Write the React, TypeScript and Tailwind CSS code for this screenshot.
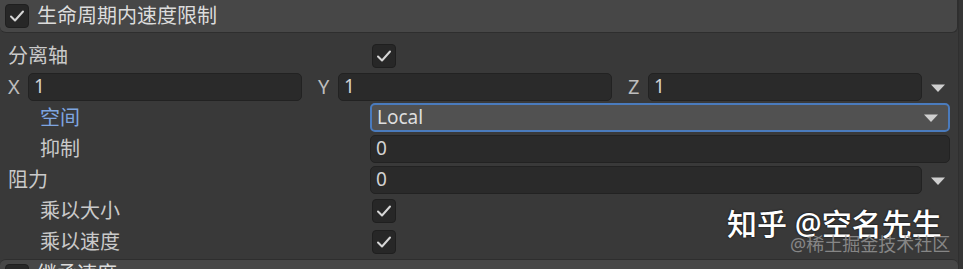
import React from "react";

const font = { fontFamily: '"Noto Sans", "Noto Sans CJK SC", sans-serif' };

function Check() {
  return (
    <div className="w-[24px] h-[24px] rounded-[4px] bg-[#272727] border border-[#1f1f1f] flex items-center justify-center">
      <svg width="16" height="14" viewBox="0 0 16 14">
        <path d="M2 7.5 L6 11.5 L14 2.5" fill="none" stroke="#d6d6d6" strokeWidth="2" strokeLinecap="round" strokeLinejoin="round" />
      </svg>
    </div>
  );
}

function Arrow() {
  return (
    <svg width="16" height="10" viewBox="0 0 16 10">
      <path d="M1 1.5 L15 1.5 L8 9 Z" fill="#cfcfcf" />
    </svg>
  );
}

function Field({ value, className = "" }: { value: string; className?: string }) {
  return (
    <div className={"h-[28px] rounded-[5px] bg-[#2a2a2a] border border-[#222] flex items-center pl-[5px] text-[19px] text-[#d2d2d2] " + className}>
      {value}
    </div>
  );
}

function Row({ children }: { children: React.ReactNode }) {
  return <div className="h-[31px] flex items-center">{children}</div>;
}

export default function App() {
  return (
    <div className="w-[963px] h-[269px] bg-[#393939] relative overflow-hidden" style={font}>
      {/* Header */}
      <div className="h-[33px] mr-[5px] bg-[#474747] rounded-b-[6px] border-b border-r border-[#2e2e2e] flex items-center pl-[5px]">
        <Check />
        <span className="ml-[8px] text-[20px] text-[#dcdcdc] leading-none">生命周期内速度限制</span>
      </div>

      <div className="mt-[7px]">
        <Row>
          <span className="w-[370px] pl-[8px] text-[20px] text-[#cacaca]">分离轴</span>
          <div className="ml-[2px]"><Check /></div>
        </Row>
        <Row>
          <span className="w-[20px] pl-[8px] box-content text-[20px] text-[#bdbdbd] leading-none">X</span>
          <Field value="1" className="w-[274px]" />
          <span className="w-[20px] ml-[16px] text-[20px] text-[#bdbdbd] leading-none">Y</span>
          <Field value="1" className="w-[274px]" />
          <span className="w-[20px] ml-[16px] text-[20px] text-[#bdbdbd] leading-none">Z</span>
          <Field value="1" className="w-[274px]" />
          <div className="ml-[8px] mt-[2px]"><Arrow /></div>
        </Row>
        <Row>
          <span className="w-[370px] pl-[40px] text-[20px] text-[#7ea5e0]">空间</span>
          <div className="w-[580px] h-[29px] rounded-[5px] bg-[#515151] border-2 border-[#4a7bbd] flex items-center pl-[5px] pr-[9px] text-[19px] text-[#dedede]">
            <span className="flex-1">Local</span>
            <Arrow />
          </div>
        </Row>
        <Row>
          <span className="w-[370px] pl-[40px] text-[20px] text-[#cacaca]">抑制</span>
          <Field value="0" className="w-[580px]" />
        </Row>
        <Row>
          <span className="w-[370px] pl-[8px] text-[20px] text-[#cacaca]">阻力</span>
          <Field value="0" className="w-[552px]" />
          <div className="ml-[8px] mt-[2px]"><Arrow /></div>
        </Row>
        <Row>
          <span className="w-[370px] pl-[40px] text-[20px] text-[#cacaca]">乘以大小</span>
          <div className="ml-[2px]"><Check /></div>
        </Row>
        <Row>
          <span className="w-[370px] pl-[40px] text-[20px] text-[#cacaca]">乘以速度</span>
          <div className="ml-[2px]"><Check /></div>
        </Row>
      </div>

      {/* Next header */}
      <div className="mt-[2px] h-[33px] mr-[5px] bg-[#474747] rounded-t-[6px] border-t border-[#2e2e2e] flex items-start pt-[4px] pl-[5px]">
        <Check />
        <span className="ml-[8px] text-[20px] text-[#dcdcdc] leading-none">继承速度</span>
      </div>

      {/* right edge */}
      <div className="absolute right-0 top-0 w-[5px] h-full bg-[#353535] border-l border-[#2f2f2f]" />

      {/* Watermarks */}
      <div className="absolute left-[727px] top-[209px] whitespace-nowrap text-[30px] leading-none text-white font-medium" style={{ textShadow: "0 0 2px #000" }}>
        知乎 @空名先生
      </div>
      <div className="absolute left-[790px] top-[235px] whitespace-nowrap text-[18px] leading-none text-[#9a9a9a] opacity-80">
        @稀土掘金技术社区
      </div>
    </div>
  );
}
